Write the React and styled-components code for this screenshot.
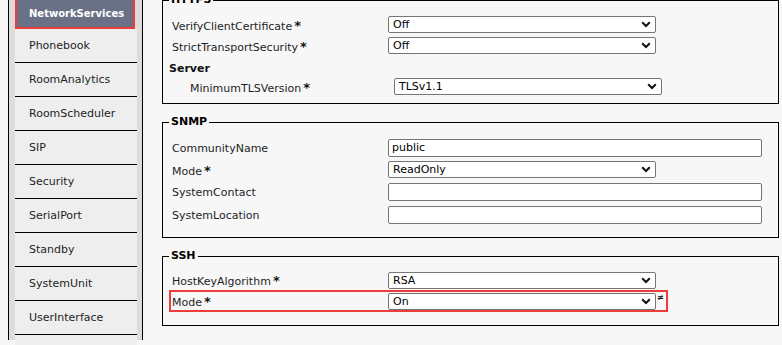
import React from "react";
import styled, { createGlobalStyle } from "styled-components";

const GlobalStyle = createGlobalStyle`
  html, body {
    margin: 0;
    padding: 0;
    height: 100%;
    overflow: hidden;
    background: #f7f7f7;
  }
  body {
    font-family: "DejaVu Sans", Verdana, sans-serif;
    font-size: 11px;
    color: #1e1e1e;
  }
`;

const menu = [
  "Phonebook",
  "RoomAnalytics",
  "RoomScheduler",
  "SIP",
  "Security",
  "SerialPort",
  "Standby",
  "SystemUnit",
  "UserInterface",
  "",
];

const App = () => {
  return (
    <>
      <GlobalStyle />
      <Page>
        <Sidebar>
          <SideRail>
            <ActiveItem>NetworkServices</ActiveItem>
            {menu.map((m, i) => (
              <MenuItem key={i}>{m}</MenuItem>
            ))}
          </SideRail>
        </Sidebar>

        <Main>
          <Group $pb={6}>
            <Legend>HTTPS</Legend>
            <GroupBody>
              <Row $h={21}>
                <Label>
                  VerifyClientCertificate<Req>*</Req>
                </Label>
                <Select value="Off" />
              </Row>
              <Row $h={21}>
                <Label>
                  StrictTransportSecurity<Req>*</Req>
                </Label>
                <Select value="Off" />
              </Row>
              <SubHead>Server</SubHead>
              <Row $h={21}>
                <Label $indent>
                  MinimumTLSVersion<Req>*</Req>
                </Label>
                <Select value="TLSv1.1" />
              </Row>
            </GroupBody>
          </Group>

          <Group $pb={11}>
            <Legend>SNMP</Legend>
            <GroupBody>
              <Row $h={23}>
                <Label>CommunityName</Label>
                <TextInput defaultValue="public" />
              </Row>
              <Row $h={21}>
                <Label>
                  Mode<Req>*</Req>
                </Label>
                <Select value="ReadOnly" />
              </Row>
              <Row $h={23}>
                <Label>SystemContact</Label>
                <TextInput defaultValue="" />
              </Row>
              <Row $h={23}>
                <Label>SystemLocation</Label>
                <TextInput defaultValue="" />
              </Row>
            </GroupBody>
          </Group>

          <Group $pb={13}>
            <Legend>SSH</Legend>
            <GroupBody>
              <Row $h={20}>
                <Label>
                  HostKeyAlgorithm<Req>*</Req>
                </Label>
                <Select value="RSA" />
              </Row>
              <MarkedRow>
                <Label $marked>
                  Mode<Req>*</Req>
                </Label>
                <Select value="On" />
                <Changed>≠</Changed>
              </MarkedRow>
            </GroupBody>
          </Group>
        </Main>
      </Page>
    </>
  );
};

const Select = ({ value }) => (
  <SelectBox role="combobox">
    <SelectValue>{value}</SelectValue>
    <svg width="10" height="7" viewBox="0 0 10 7">
      <path d="M1.2 1.3 L5 5 L8.8 1.3" fill="none" stroke="#111" strokeWidth="2" />
    </svg>
  </SelectBox>
);

const Page = styled.div`
  display: flex;
  height: 345px;
  overflow: hidden;
`;

const Sidebar = styled.div`
  flex: 0 0 auto;
  padding-left: 8px;
  height: 100%;
`;

const SideRail = styled.div`
  width: 122px;
  height: 100%;
  padding: 0 5px 0 6px;
  background: #dcdcdc;
  border-left: 1px solid #000;
  border-right: 1px solid #000;
`;

const MenuItem = styled.div`
  box-sizing: border-box;
  height: 34px;
  line-height: 34px;
  padding-left: 14px;
  background: #eeeeee;
  border-bottom: 1px solid #000;
  color: #1e1e1e;
  white-space: nowrap;
`;

const ActiveItem = styled.div`
  box-sizing: border-box;
  width: 120px;
  height: 34px;
  margin-top: -5px;
  padding: 2px 0 0 12px;
  line-height: 30px;
  background: #6a7085;
  border: 2px solid #ee3b3b;
  color: #fff;
  font-size: 10px;
  font-weight: bold;
  white-space: nowrap;
`;

const Main = styled.div`
  flex: 1 1 auto;
  margin-top: -6px;
  padding: 0 3px 0 19px;
`;

const Group = styled.fieldset`
  margin: 0 0 12px;
  min-width: 0;
  padding: 0 6px ${(p) => p.$pb}px;
  border: 1px solid #000;
`;

const Legend = styled.legend`
  padding: 0 2px;
  font-size: 11px;
  line-height: 12px;
  font-weight: bold;
  color: #000;
`;

const GroupBody = styled.div`
  padding-top: 8px;
`;

const Row = styled.div`
  display: flex;
  align-items: center;
  height: ${(p) => p.$h}px;
`;

const MarkedRow = styled.div`
  display: flex;
  align-items: center;
  box-sizing: border-box;
  width: fit-content;
  height: 22px;
  padding-right: 2px;
  border: 2px solid #ee3b3b;
`;

const Label = styled.div`
  flex: 0 0 auto;
  box-sizing: border-box;
  width: ${(p) => (p.$indent ? 225 : p.$marked ? 217 : 219)}px;
  padding-left: ${(p) => (p.$indent ? 21 : p.$marked ? 1 : 3)}px;
  padding-top: 1px;
  white-space: nowrap;
`;

const Req = styled.span`
  margin-left: 2px;
  font-size: 13px;
  font-weight: bold;
  color: #111;
`;

const SubHead = styled.div`
  height: 15px;
  padding-top: 5px;
  line-height: 15px;
  font-weight: bold;
  color: #111;
`;

const SelectBox = styled.div`
  display: flex;
  align-items: center;
  justify-content: space-between;
  box-sizing: border-box;
  width: 268px;
  height: 17px;
  padding: 0 4px 0 4px;
  background: #fff;
  border: 1px solid #767676;
  border-radius: 2px;
  color: #000;
  cursor: default;
`;

const SelectValue = styled.span`
  line-height: 15px;
`;

const TextInput = styled.input.attrs({ type: "text" })`
  box-sizing: border-box;
  width: 374px;
  height: 18px;
  margin: 0;
  padding: 0 3px;
  background: #fff;
  border: 1px solid #767676;
  border-radius: 2px;
  font-family: "DejaVu Sans", Verdana, sans-serif;
  font-size: 11px;
  color: #000;
  outline: none;
`;

const Changed = styled.span`
  align-self: flex-start;
  margin: 2px 0 0 1px;
  font-size: 8px;
  line-height: 8px;
  font-weight: bold;
  color: #111;
`;

export default App;
